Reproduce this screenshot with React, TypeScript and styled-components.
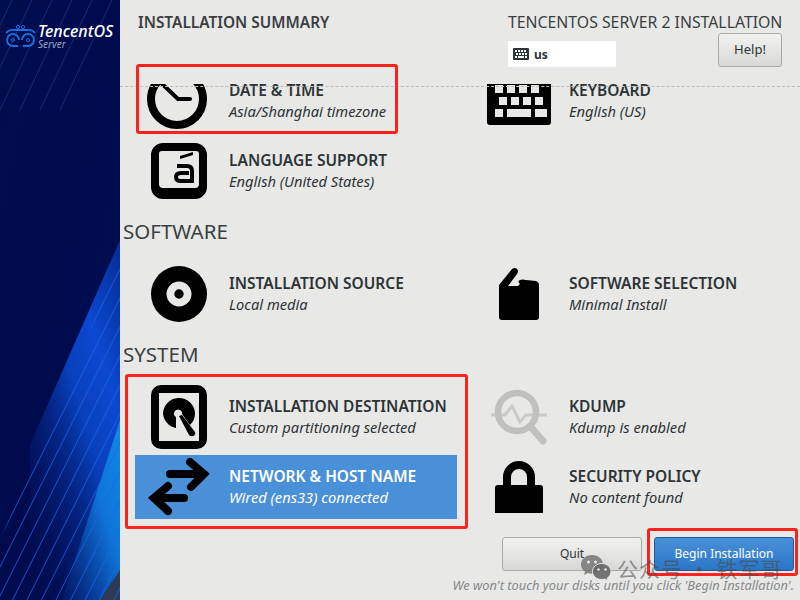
import styled, { createGlobalStyle } from 'styled-components';

const GlobalStyle = createGlobalStyle`
  html, body {
    margin: 0;
    padding: 0;
    background: #e8e8e7;
  }
  #root {
    width: 800px;
    height: 600px;
  }
`;

const Screen = styled.div`
  position: relative;
  display: flex;
  width: 800px;
  height: 600px;
  overflow: hidden;
  font-family: 'Noto Sans', 'Open Sans', sans-serif;
  color: #2e3436;
  background: #e8e8e7;
`;

const Sidebar = styled.aside`
  position: relative;
  flex: 0 0 120px;
  height: 600px;
  overflow: hidden;
  background: #000a4a;
`;

const SidebarArt = styled.svg`
  position: absolute;
  inset: 0;
`;

const Logo = styled.div`
  position: relative;
  display: flex;
  align-items: flex-start;
  gap: 2px;
  padding: 24px 0 0 5px;
`;

const LogoText = styled.div`
  display: flex;
  flex-direction: column;
  color: #fff;
  font-family: 'Noto Sans', sans-serif;
  font-style: italic;
  font-size: 16px;
  line-height: 14px;
  font-weight: 500;
  white-space: nowrap;
  span {
    font-size: 10px;
    line-height: 13px;
    font-weight: 400;
    color: #9ba3c4;
  }
`;

const Main = styled.main`
  flex: 1;
  display: flex;
  flex-direction: column;
  min-width: 0;
`;

const Header = styled.header`
  display: flex;
  justify-content: space-between;
  height: 84px;
  padding: 13px 18px 0;
  box-sizing: border-box;
`;

const PageTitle = styled.h1`
  margin: 0;
  padding-top: 1px;
  font-size: 15.4px;
  line-height: 18px;
  font-weight: 600;
  color: #3a3f41;
`;

const HeaderRight = styled.div`
  display: flex;
  flex-direction: column;
  width: 274px;
`;

const ProductTitle = styled.div`
  font-size: 15.8px;
  line-height: 18px;
  color: #3a3f41;
  white-space: nowrap;
  text-align: right;
`;

const HeaderTools = styled.div`
  display: flex;
  justify-content: space-between;
  align-items: flex-end;
  margin-top: 2px;
`;

const KeyboardIndicator = styled.div`
  display: flex;
  align-items: center;
  gap: 5px;
  width: 108px;
  height: 26px;
  padding-left: 5px;
  box-sizing: border-box;
  background: #fff;
  font-size: 12px;
  font-weight: 700;
  color: #2e3436;
`;

const Button = styled.button<{ $primary?: boolean; $width: number; $small?: boolean }>`
  width: ${(p) => p.$width}px;
  height: 34px;
  padding: 0 0 2px;
  font-family: inherit;
  font-size: ${(p) => (p.$small ? 12 : 13)}px;
  border-radius: 3px;
  color: ${(p) => (p.$primary ? '#fff' : '#2e3436')};
  border: 1px solid ${(p) => (p.$primary ? '#1f5b9c' : '#a9a9a6')};
  background: ${(p) =>
    p.$primary
      ? 'linear-gradient(#4a90d9, #2a76c6)'
      : 'linear-gradient(#f2f2f1, #d8d8d6)'};
`;

const Scroller = styled.div`
  position: relative;
  flex: 1;
  min-height: 0;
  overflow: hidden;

  &::after {
    content: '';
    position: absolute;
    top: 2px;
    left: 0;
    right: 0;
    border-top: 1px dashed #bdbdbb;
  }
`;

const ScrollInner = styled.div`
  margin-top: -23px;
  padding-left: 3px;
`;

const SectionTitle = styled.h2`
  margin: 0;
  height: 36px;
  font-size: 20.5px;
  line-height: 26px;
  font-weight: 400;
  color: #3a3f41;
`;

const SpokeGrid = styled.div`
  display: grid;
  grid-template-columns: 340px 300px;
  row-gap: 6px;
  padding: 8px 0 15px;
`;

const Spoke = styled.div<{ $selected?: boolean }>`
  display: flex;
  align-items: center;
  height: 64px;
  margin-left: 12px;
  width: 322px;
  background: ${(p) => (p.$selected ? '#4a90d9' : 'transparent')};
  color: ${(p) => (p.$selected ? '#fff' : '#2e3436')};
`;

const SpokeIcon = styled.div`
  flex: 0 0 88px;
  display: flex;
  justify-content: center;
  align-items: center;
  height: 64px;
  margin-right: 6px;
`;

const SpokeText = styled.div`
  display: flex;
  flex-direction: column;
  white-space: nowrap;
`;

const SpokeName = styled.div`
  font-size: 15.5px;
  line-height: 21px;
  font-weight: 600;
`;

const SpokeStatus = styled.div`
  font-size: 14.7px;
  line-height: 21px;
  font-style: italic;
`;

const Footer = styled.footer`
  flex: 0 0 auto;
  display: flex;
  flex-direction: column;
  align-items: flex-end;
  padding: 0 6px 6px 0;
`;

const FooterButtons = styled.div`
  display: flex;
  gap: 12px;
`;

const FooterNote = styled.div`
  margin-top: 6px;
  font-size: 12.85px;
  line-height: 17px;
  font-style: italic;
  color: #85888a;
  white-space: nowrap;
`;

const RedBox = styled.div<{ $x: number; $y: number; $w: number; $h: number }>`
  position: absolute;
  left: ${(p) => p.$x}px;
  top: ${(p) => p.$y}px;
  width: ${(p) => p.$w}px;
  height: ${(p) => p.$h}px;
  box-sizing: border-box;
  border: 3px solid #fb231c;
  border-radius: 3px;
`;

const Watermark = styled.div`
  position: absolute;
  left: 581px;
  top: 554px;
  display: flex;
  align-items: center;
  gap: 6px;
  font-family: 'Noto Sans CJK SC', sans-serif;
  font-size: 21px;
  line-height: 28px;
  letter-spacing: 1px;
  color: rgba(70, 70, 70, 0.55);
  white-space: nowrap;
`;

const ClockIcon = () => (
  <svg width="64" height="64" viewBox="0 0 64 64">
    <circle cx="30" cy="30" r="26" fill="none" stroke="#000" strokeWidth="8" />
    <path d="M12 12 L31 30 H43" fill="none" stroke="#000" strokeWidth="4" strokeLinecap="round" />
  </svg>
);

const LanguageIcon = () => (
  <svg width="56" height="56" viewBox="0 0 56 56">
    <path
      fillRule="evenodd"
      d="M12 0H44A12 12 0 0 1 56 12V44A12 12 0 0 1 44 56H12A12 12 0 0 1 0 44V12A12 12 0 0 1 12 0ZM11 8A3 3 0 0 0 8 11V41A4 4 0 0 0 12 45H44A4 4 0 0 0 48 41V11A3 3 0 0 0 45 8Z"
      fill="#000"
    />
    <path d="M29 13 L42 9 V12 L29 16Z" fill="#000" />
    <path
      d="M26 23H36Q41 23 41 28V38H30Q25 38 25 34 Q25 30 30 30H38"
      fill="none"
      stroke="#000"
      strokeWidth="4"
    />
  </svg>
);

const KeyboardIcon = () => (
  <svg width="64" height="48" viewBox="0 0 64 48">
    <path
      fillRule="evenodd"
      d="M3 0H61A3 3 0 0 1 64 3V45A3 3 0 0 1 61 48H3A3 3 0 0 1 0 45V3A3 3 0 0 1 3 0ZM8 8V16H16V8ZM20 8V16H28V8ZM32 8V16H40V8ZM44 8V16H52V8ZM12 20V28H20V20ZM24 20V28H32V20ZM36 20V28H44V20ZM48 20V28H56V20ZM8 32V40H16V32ZM20 32V40H44V32ZM48 32V40H60V32Z"
      fill="#000"
    />
  </svg>
);

const DiscIcon = () => (
  <svg width="56" height="56" viewBox="0 0 56 56">
    <circle cx="28" cy="28" r="28" fill="#000" />
    <circle cx="28" cy="28" r="8.6" fill="none" stroke="#e8e8e7" strokeWidth="7.8" />
  </svg>
);

const SoftwareIcon = () => (
  <svg width="40" height="52" viewBox="0 0 40 52">
    <path
      d="M0 17 L13 1 Q16 -1 18 1 Q20 3 18 6 L9 18 H19 L21 16 Q18 13 21 12 Q23 11 27 12 L37 13 Q40 14 40 17 V49 Q40 52 37 52 H3 Q0 52 0 49 Z"
      fill="#000"
    />
  </svg>
);

const DiskIcon = () => (
  <svg width="56" height="64" viewBox="0 0 56 64">
    <path
      fillRule="evenodd"
      d="M10 0H46A10 10 0 0 1 56 10V54A10 10 0 0 1 46 64H10A10 10 0 0 1 0 54V10A10 10 0 0 1 10 0ZM8 8V56H48V8Z"
      fill="#000"
    />
    <path
      d="M27 13 A16 16 0 0 1 44 28 A16 16 0 0 1 39 40 L31 29 A4 4 0 1 0 25 32 L25 43 A16 16 0 0 1 12 28 A16 16 0 0 1 27 13Z"
      fill="#000"
    />
    <path d="M28 31 L31 30 L44 47 Q45 50 42 51 Q40 52 38 50Z" fill="#000" />
  </svg>
);

const NetworkIcon = () => (
  <svg width="62" height="58" viewBox="0 0 62 58">
    <g fill="none" stroke="#000" strokeWidth="8" strokeLinecap="round" strokeLinejoin="miter">
      <path d="M22 16 H52" />
      <path d="M42 4 L56 16 L43 29" />
      <path d="M36 40 H10" />
      <path d="M20 28 L6 40 L20 53" />
    </g>
  </svg>
);

const KdumpIcon = () => (
  <svg width="56" height="56" viewBox="0 0 56 56">
    <g fill="none" stroke="#c0c0be">
      <path d="M0 26 H14 L21 17 L29 33 L35 26 H56" strokeWidth="3" opacity="0.75" />
      <circle cx="26" cy="23" r="19" strokeWidth="6.5" />
      <path d="M39 37 L52 52" strokeWidth="7" strokeLinecap="round" />
    </g>
  </svg>
);

const LockIcon = () => (
  <svg width="48" height="52" viewBox="0 0 48 52">
    <path
      fillRule="evenodd"
      d="M8 24V16A16 16 0 0 1 40 16V24H45Q48 24 48 27V52H0V27Q0 24 3 24ZM16 24H32V16A8 8 0 0 0 16 16Z"
      fill="#000"
    />
  </svg>
);

const SmallKeyboard = () => (
  <svg width="16" height="12" viewBox="0 0 16 12">
    <path
      fillRule="evenodd"
      d="M1 0H15A1 1 0 0 1 16 1V11A1 1 0 0 1 15 12H1A1 1 0 0 1 0 11V1A1 1 0 0 1 1 0ZM2 2V4H4V2ZM5 2V4H7V2ZM8 2V4H10V2ZM11 2V4H13V2ZM3 5V7H5V5ZM6 5V7H8V5ZM9 5V7H11V5ZM12 5V7H14V5ZM2 8V10H4V8ZM5 8V10H11V8ZM12 8V10H14V8Z"
      fill="#2e3436"
    />
  </svg>
);

const TencentMark = () => (
  <svg width="31" height="24" viewBox="0 0 31 24">
    <g fill="none" stroke="#1b6fe0" strokeWidth="1.8">
      <path d="M1 9 Q4 5 10 6 H21 Q27 5 30 9" />
      <circle cx="13" cy="3" r="1.6" strokeWidth="1" />
      <circle cx="18" cy="3" r="1.6" strokeWidth="1" />
      <path d="M14 16 A6 6 0 1 0 8 22 H13" />
      <path d="M18 22 H23 A6 6 0 1 0 17 16" />
      <circle cx="8" cy="16" r="1.5" strokeWidth="1" />
      <circle cx="23" cy="16" r="1.5" strokeWidth="1" />
    </g>
  </svg>
);

const WeChatMark = () => (
  <svg width="30" height="26" viewBox="0 0 30 26">
    <path d="M11 0C5 0 0 4 0 9.5C0 12.5 1.5 15 4 16.5L3 20L7 18C8.3 18.5 9.5 18.7 11 18.7C17 18.7 22 14.5 22 9.5C22 4 17 0 11 0Z" fill="#6f6f6f" fillOpacity="0.8" />
    <circle cx="7.5" cy="7" r="1.5" fill="#e8e8e7" />
    <circle cx="14.5" cy="7" r="1.5" fill="#e8e8e7" />
    <path d="M21 8.5C15.5 8.5 11.5 12 11.5 16.5C11.5 21 15.5 24.5 21 24.5C22 24.5 23 24.3 24 24L27 26L26.3 23C28.6 21.5 30 19.2 30 16.5C30 12 26 8.5 21 8.5Z" fill="#666" fillOpacity="0.9" stroke="#e8e8e7" strokeWidth="1" />
    <circle cx="17.5" cy="14.5" r="1.2" fill="#e8e8e7" />
    <circle cx="24.5" cy="14.5" r="1.2" fill="#e8e8e7" />
  </svg>
);

const lineOffsets = Array.from({ length: 34 }, (_, i) => i * 14.5 - 60);

const Art = () => (
  <SidebarArt width="120" height="600" viewBox="0 0 120 600">
    <defs>
      <linearGradient id="base" x1="0" y1="0" x2="1" y2="1">
        <stop offset="0" stopColor="#000d4d" />
        <stop offset="0.5" stopColor="#000b4e" />
        <stop offset="1" stopColor="#001050" />
      </linearGradient>
      <linearGradient id="band" x1="0.1" y1="1" x2="0.9" y2="0">
        <stop offset="0" stopColor="#001060" stopOpacity="0" />
        <stop offset="0.55" stopColor="#0a46c8" />
        <stop offset="0.75" stopColor="#0d4fe0" />
        <stop offset="1" stopColor="#0535a8" />
      </linearGradient>
      <linearGradient id="glow" x1="0" y1="1" x2="1" y2="0">
        <stop offset="0" stopColor="#0a3a9a" stopOpacity="0.2" />
        <stop offset="0.6" stopColor="#0f7bdc" />
        <stop offset="1" stopColor="#0f90e8" />
      </linearGradient>
      <clipPath id="lower">
        <polygon points="120,260 120,600 0,600 0,540" />
      </clipPath>
    </defs>
    <rect width="120" height="600" fill="url(#base)" />
    <polygon points="120,240 120,600 30,600 30,445" fill="url(#band)" opacity="0.9" />
    <polygon points="120,420 120,600 62,600" fill="url(#glow)" opacity="0.9" />
    <polygon points="120,570 120,600 100,600" fill="#2c3a55" />
    <g clipPath="url(#lower)">
      {lineOffsets.map((x) => (
        <line key={x} x1={x} y1={600} x2={x + 300} y2={0} stroke="#1f66e6" strokeOpacity="0.8" strokeWidth="1" />
      ))}
    </g>
    {[-40, -20, 0, 20, 40, 60].map((x) => (
      <path key={x} d={`M${x} 110 L${x + 52} 0`} stroke="#3c6fd0" strokeOpacity="0.4" strokeWidth="0.8" />
    ))}
  </SidebarArt>
);

type SpokeProps = {
  icon: React.ReactNode;
  name: string;
  status: string;
  selected?: boolean;
};

const SpokeItem = ({ icon, name, status, selected }: SpokeProps) => (
  <Spoke $selected={selected}>
    <SpokeIcon>{icon}</SpokeIcon>
    <SpokeText>
      <SpokeName>{name}</SpokeName>
      <SpokeStatus>{status}</SpokeStatus>
    </SpokeText>
  </Spoke>
);

const App = () => (
  <Screen>
    <GlobalStyle />
    <Sidebar>
      <Art />
      <Logo>
        <TencentMark />
        <LogoText>
          TencentOS
          <span>Server</span>
        </LogoText>
      </Logo>
    </Sidebar>
    <Main>
      <Header>
        <PageTitle>INSTALLATION SUMMARY</PageTitle>
        <HeaderRight>
          <ProductTitle>TENCENTOS SERVER 2 INSTALLATION</ProductTitle>
          <HeaderTools>
            <KeyboardIndicator>
              <SmallKeyboard />
              us
            </KeyboardIndicator>
            <Button $width={64}>Help!</Button>
          </HeaderTools>
        </HeaderRight>
      </Header>
      <Scroller>
        <ScrollInner>
          <SpokeGrid>
            <SpokeItem icon={<ClockIcon />} name="DATE &amp; TIME" status="Asia/Shanghai timezone" />
            <SpokeItem icon={<KeyboardIcon />} name="KEYBOARD" status="English (US)" />
            <SpokeItem icon={<LanguageIcon />} name="LANGUAGE SUPPORT" status="English (United States)" />
          </SpokeGrid>
          <SectionTitle>SOFTWARE</SectionTitle>
          <SpokeGrid>
            <SpokeItem icon={<DiscIcon />} name="INSTALLATION SOURCE" status="Local media" />
            <SpokeItem icon={<SoftwareIcon />} name="SOFTWARE SELECTION" status="Minimal Install" />
          </SpokeGrid>
          <SectionTitle>SYSTEM</SectionTitle>
          <SpokeGrid>
            <SpokeItem icon={<DiskIcon />} name="INSTALLATION DESTINATION" status="Custom partitioning selected" />
            <SpokeItem icon={<KdumpIcon />} name="KDUMP" status="Kdump is enabled" />
            <SpokeItem selected icon={<NetworkIcon />} name="NETWORK &amp; HOST NAME" status="Wired (ens33) connected" />
            <SpokeItem icon={<LockIcon />} name="SECURITY POLICY" status="No content found" />
          </SpokeGrid>
        </ScrollInner>
      </Scroller>
      <Footer>
        <FooterButtons>
          <Button $small $width={140}>
            Quit
          </Button>
          <Button $small $primary $width={140}>
            Begin Installation
          </Button>
        </FooterButtons>
        <FooterNote>We won't touch your disks until you click 'Begin Installation'.</FooterNote>
      </Footer>
    </Main>
    <RedBox $x={136} $y={64} $w={262} $h={70} />
    <RedBox $x={125} $y={374} $w={343} $h={155} />
    <RedBox $x={647} $y={528} $w={151} $h={48} />
    <Watermark>
      <WeChatMark />
      公众号 · 铁军哥
    </Watermark>
  </Screen>
);

export default App;
